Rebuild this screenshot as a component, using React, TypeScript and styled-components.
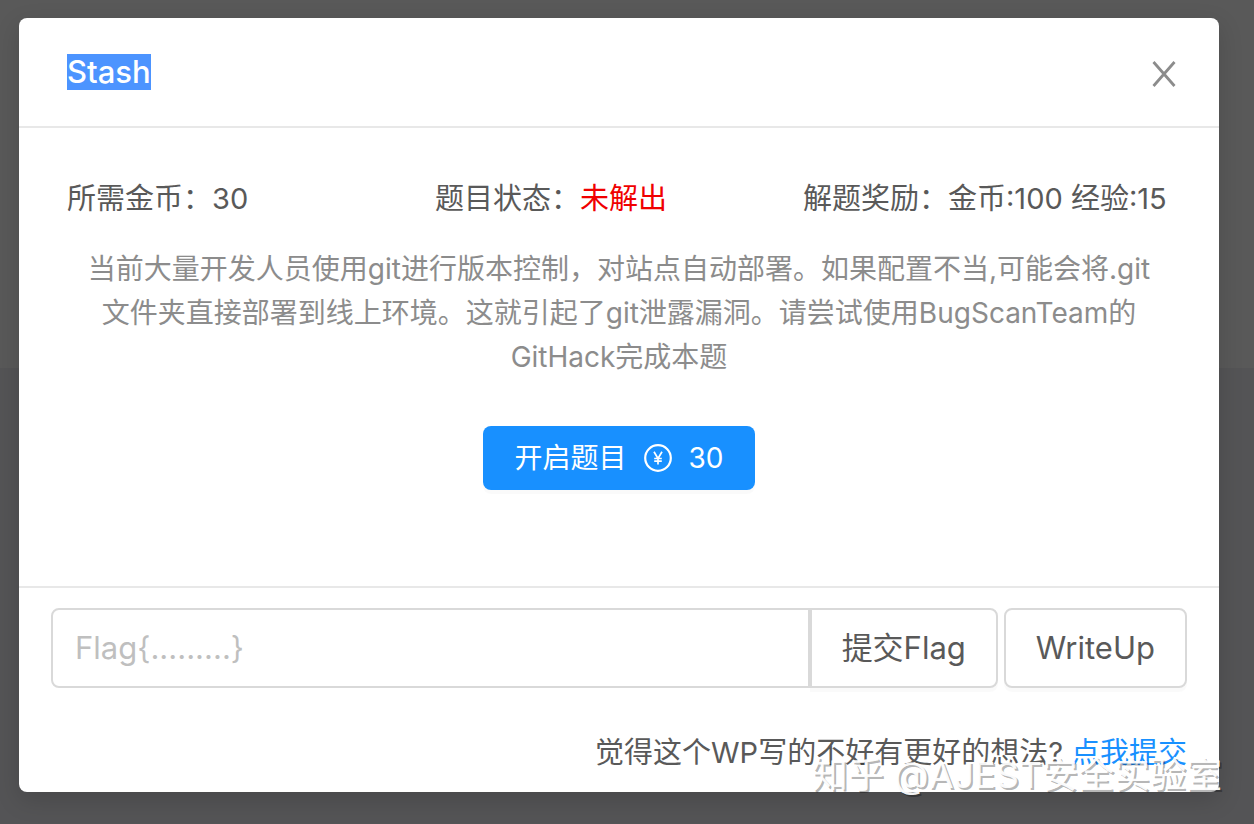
import React from 'react';
import styled, { createGlobalStyle } from 'styled-components';

const Global = createGlobalStyle`
  * { box-sizing: border-box; }
  body {
    margin: 0;
    background: linear-gradient(#595959 0 368px, #545456 368px);
    font-family: Inter, "Noto Sans CJK SC", sans-serif;
    font-size: 29px;
    line-height: 44px;
    color: #595959;
  }
  button, input { font-family: inherit; line-height: 44px; }
`;

const Backdrop = styled.main`
  position: relative;
  min-height: 100vh;
  padding: 18px 35px 32px 19px;
`;

const Dialog = styled.section`
  background: #fff;
  border-radius: 8px;
  box-shadow: 0 8px 24px rgba(0, 0, 0, 0.15);
`;

const Header = styled.header`
  display: flex;
  align-items: center;
  justify-content: space-between;
  height: 110px;
  padding: 0 40px 0 48px;
  border-bottom: 2px solid #e8e8e8;
`;

const Title = styled.h1`
  margin: 0;
  font-size: 31px;
  line-height: 36px;
  font-weight: 500;
  color: #fff;
  background: #4c94ff;
`;

const CloseButton = styled.button`
  display: flex;
  padding: 4px 0 0;
  border: 0;
  background: none;
  color: #8c8c8c;
  cursor: pointer;
`;

const Body = styled.div`
  min-height: 458px;
  padding: 49px 48px 48px;
`;

const Stats = styled.div`
  display: grid;
  grid-template-columns: repeat(3, 1fr);
  white-space: nowrap;
`;

const Status = styled.span`
  color: #f00000;
`;

const Description = styled.p`
  margin: 26px 0 47px;
  padding: 0 12px;
  color: #8c8c8c;
  font-size: 28px;
  text-align: center;
`;

const ButtonRow = styled.div`
  display: flex;
  justify-content: center;
`;

const StartButton = styled.button`
  display: flex;
  align-items: center;
  gap: 17px;
  height: 64px;
  padding: 0 32px;
  border: 0;
  border-radius: 8px;
  background: #1890ff;
  box-shadow: 0 4px 0 rgba(0, 0, 0, 0.02);
  color: #fff;
  font-size: 28px;
  cursor: pointer;
`;

const Footer = styled.footer`
  padding: 20px 32px 17px;
  border-top: 2px solid #e8e8e8;
`;

const FlagForm = styled.form`
  display: flex;
  height: 80px;
`;

const FlagInput = styled.input`
  flex: 1;
  min-width: 0;
  padding: 0 22px;
  border: 2px solid #d9d9d9;
  border-radius: 8px 0 0 8px;
  font-size: 31px;
  color: #595959;
  &::placeholder { color: #bfbfbf; }
`;

const FormButton = styled.button<{ $joined?: boolean }>`
  padding: 0 30px;
  margin-left: ${(p) => (p.$joined ? 0 : 6)}px;
  border: 2px solid #d9d9d9;
  border-radius: ${(p) => (p.$joined ? '0 8px 8px 0' : '8px')};
  background: #fff;
  box-shadow: 0 4px 0 rgba(0, 0, 0, 0.02);
  color: #595959;
  font-size: 31px;
  cursor: pointer;
`;

const Feedback = styled.p`
  margin: 43px 0 0;
  text-align: right;
`;

const Link = styled.a`
  margin-left: 8px;
  color: #1890ff;
  text-decoration: none;
`;

const Watermark = styled.div`
  position: absolute;
  right: 32px;
  bottom: 27px;
  color: rgba(255, 255, 255, 0.95);
  font-size: 36px;
  text-shadow: 2px 2px 0 rgba(0, 0, 0, 0.3);
  pointer-events: none;
`;

export default function App() {
  return (
    <>
      <Global />
      <Backdrop>
        <Dialog role="dialog" aria-labelledby="title">
          <Header>
            <Title id="title">Stash</Title>
            <CloseButton aria-label="关闭">
              <svg width="30" height="30" viewBox="0 0 30 30" fill="none" stroke="currentColor" strokeWidth="2.8">
                <path d="M4.500 3 25.500 27M25.500 3 4.500 27" />
              </svg>
            </CloseButton>
          </Header>
          <Body>
            <Stats>
              <span>所需金币：30</span>
              <span>题目状态：<Status>未解出</Status></span>
              <span>解题奖励：金币:100 经验:15</span>
            </Stats>
            <Description>
              当前大量开发人员使用git进行版本控制，对站点自动部署。如果配置不当,可能会将.git文件夹直接部署到线上环境。这就引起了git泄露漏洞。请尝试使用BugScanTeam的GitHack完成本题
            </Description>
            <ButtonRow>
              <StartButton>
                <span>开启题目</span>
                <svg width="28" height="28" viewBox="0 0 28 28" fill="none" stroke="currentColor" strokeWidth="2.200">
                  <circle cx="14" cy="14" r="12.800" />
                  <path strokeWidth="1.700" d="M10 7.800 14 14.500 18 7.800M14 14.500V20.500M10.200 14.500H17.800M10.200 17.200H17.800" />
                </svg>
                <span>30</span>
              </StartButton>
            </ButtonRow>
          </Body>
          <Footer>
            <FlagForm onSubmit={(e) => e.preventDefault()}>
              <FlagInput aria-label="Flag" placeholder="Flag{.........}" />
              <FormButton type="submit" $joined>提交Flag</FormButton>
              <FormButton type="button">WriteUp</FormButton>
            </FlagForm>
            <Feedback>
              觉得这个WP写的不好有更好的想法?<Link href="#submit">点我提交</Link>
            </Feedback>
          </Footer>
        </Dialog>
        <Watermark>知乎 @AJEST安全实验室</Watermark>
      </Backdrop>
    </>
  );
}
